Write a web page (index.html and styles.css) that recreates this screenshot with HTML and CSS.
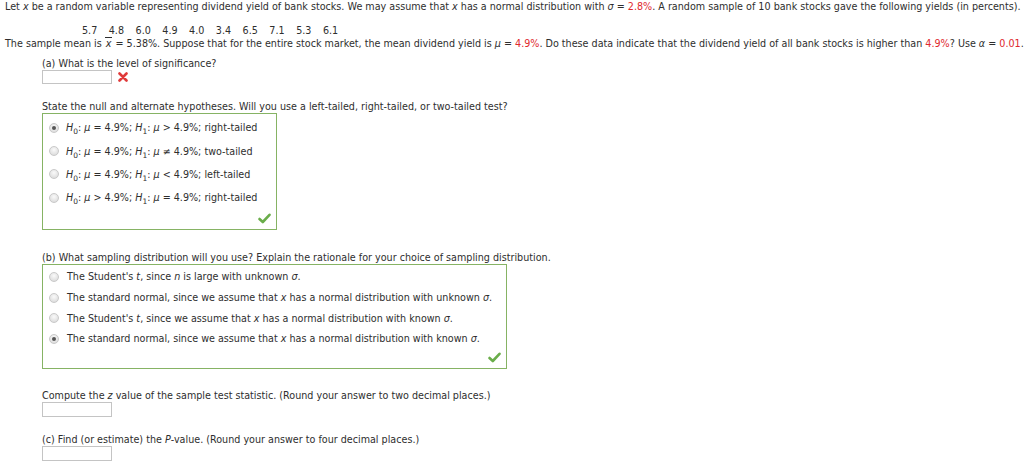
FILE: index.html
```html
<!DOCTYPE html>
<html>
<head>
<meta charset="utf-8">
<link rel="stylesheet" href="styles.css">
</head>
<body>
<p class="line">Let <i>x</i> be a random variable representing dividend yield of bank stocks. We may assume that <i>x</i> has a normal distribution with <i>σ</i> = <span class="red">2.8%</span>. A random sample of 10 bank stocks gave the following yields (in percents).</p>
<div class="data"><span>5.7</span><span>4.8</span><span>6.0</span><span>4.9</span><span>4.0</span><span>3.4</span><span>6.5</span><span>7.1</span><span>5.3</span><span>6.1</span></div>
<p class="line">The sample mean is <span class="xbar"><i>x</i></span> = 5.38%. Suppose that for the entire stock market, the mean dividend yield is <i>μ</i> = <span class="red">4.9%</span>. Do these data indicate that the dividend yield of all bank stocks is higher than <span class="red">4.9%</span>? Use <i>α</i> = <span class="red">0.01</span>.</p>

<div class="part">
  <p class="q qa">(a) What is the level of significance?</p>
  <div class="answer"><span class="input"></span><svg class="cross" width="10" height="10" viewBox="0 0 10 10"><path d="M1.5 1.5 L8.5 8.5 M8.5 1.5 L1.5 8.5" stroke="#e03a3a" stroke-width="2.6" stroke-linecap="round"/></svg></div>

  <p class="q qs">State the null and alternate hypotheses. Will you use a left-tailed, right-tailed, or two-tailed test?</p>
  <div class="box box1">
    <div class="row"><span class="radio on"></span><span><i>H</i><sub>0</sub>: <i>μ</i> = 4.9%; <i>H</i><sub>1</sub>: <i>μ</i> &gt; 4.9%; right-tailed</span></div>
    <div class="row"><span class="radio"></span><span><i>H</i><sub>0</sub>: <i>μ</i> = 4.9%; <i>H</i><sub>1</sub>: <i>μ</i> ≠ 4.9%; two-tailed</span></div>
    <div class="row"><span class="radio"></span><span><i>H</i><sub>0</sub>: <i>μ</i> = 4.9%; <i>H</i><sub>1</sub>: <i>μ</i> &lt; 4.9%; left-tailed</span></div>
    <div class="row"><span class="radio"></span><span><i>H</i><sub>0</sub>: <i>μ</i> &gt; 4.9%; <i>H</i><sub>1</sub>: <i>μ</i> = 4.9%; right-tailed</span></div>
    <svg class="check" width="13" height="11" viewBox="0 0 13 11"><path d="M1.5 6 L4.8 9 L11.5 1.8" fill="none" stroke="#6aad4a" stroke-width="2.6" stroke-linecap="round" stroke-linejoin="round"/></svg>
  </div>

  <p class="q qb">(b) What sampling distribution will you use? Explain the rationale for your choice of sampling distribution.</p>
  <div class="box box2">
    <div class="row"><span class="radio"></span><span>The Student's <i>t</i>, since <i>n</i> is large with unknown <i>σ</i>.</span></div>
    <div class="row"><span class="radio"></span><span>The standard normal, since we assume that <i>x</i> has a normal distribution with unknown <i>σ</i>.</span></div>
    <div class="row"><span class="radio"></span><span>The Student's <i>t</i>, since we assume that <i>x</i> has a normal distribution with known <i>σ</i>.</span></div>
    <div class="row"><span class="radio on"></span><span>The standard normal, since we assume that <i>x</i> has a normal distribution with known <i>σ</i>.</span></div>
    <svg class="check" width="13" height="11" viewBox="0 0 13 11"><path d="M1.5 6 L4.8 9 L11.5 1.8" fill="none" stroke="#6aad4a" stroke-width="2.6" stroke-linecap="round" stroke-linejoin="round"/></svg>
  </div>

  <p class="q qc">Compute the <i>z</i> value of the sample test statistic. (Round your answer to two decimal places.)</p>
  <div class="answer tall"><span class="input"></span></div>

  <p class="q qd">(c) Find (or estimate) the <i>P</i>-value. (Round your answer to four decimal places.)</p>
  <div class="answer tall"><span class="input"></span></div>
</div>
</body>
</html>
```

FILE: styles.css
```css
html, body {
  margin: 0;
  padding: 0;
  background: #fff;
}
body {
  padding: 0 5px;
  font-family: "DejaVu Sans", Verdana, sans-serif;
  font-size: 9.6px;
  line-height: 13px;
  color: #2e2e2e;
}
p { margin: 0; }
.red { color: #e0282e; }
i { font-style: italic; }
sub {
  font-size: 7.5px;
  line-height: 0;
  vertical-align: -3px;
}
.line { white-space: nowrap; }
.data {
  margin-top: 10.5px;
  padding-left: 77px;
  display: flex;
  gap: 11.5px;
  height: 13px;
}
.xbar {
  display: inline-block;
  border-top: 1px solid #2e2e2e;
  line-height: 11px;
  padding: 0 1px;
}
.part {
  padding-left: 37px;
}
.qa { margin-top: 7px; }
.answer {
  display: flex;
  align-items: center;
  gap: 6px;
  height: 14px;
}
.input {
  display: block;
  width: 68px;
  height: 12px;
  border: 1px solid #c4c4c4;
  background: #fff;
}
.cross { margin-top: 1px; }
.qs { margin-top: 16.5px; }
.box {
  position: relative;
  border: 1px solid #86b364;
  box-sizing: border-box;
}
.box1 {
  width: 235px;
  height: 117px;
  padding-top: 2px;
}
.box1 .row { height: 23.4px; gap: 7px; }
.box2 {
  width: 465px;
  height: 105px;
  padding-top: 2px;
}
.box2 .row { height: 20.7px; gap: 8px; }
.row {
  display: flex;
  align-items: center;
  padding-left: 6px;
  white-space: nowrap;
}
.radio {
  flex: none;
  width: 10px;
  height: 10px;
  border-radius: 50%;
  box-sizing: border-box;
  border: 1px solid #c9c9c9;
  background: radial-gradient(circle at 50% 35%, #fafafa 0%, #e4e4e4 60%, #d6d6d6 100%);
  position: relative;
}
.radio.on::after {
  content: "";
  position: absolute;
  left: 2px;
  top: 2px;
  width: 4px;
  height: 4px;
  border-radius: 50%;
  background: #555;
}
.check {
  position: absolute;
  right: 5px;
  bottom: 5px;
}
.qb { margin-top: 20.5px; }
.qc { margin-top: 20.5px; }
.qd { margin-top: 15.5px; }
.answer.tall { height: 15px; }
.answer.tall .input { height: 13px; }
```
